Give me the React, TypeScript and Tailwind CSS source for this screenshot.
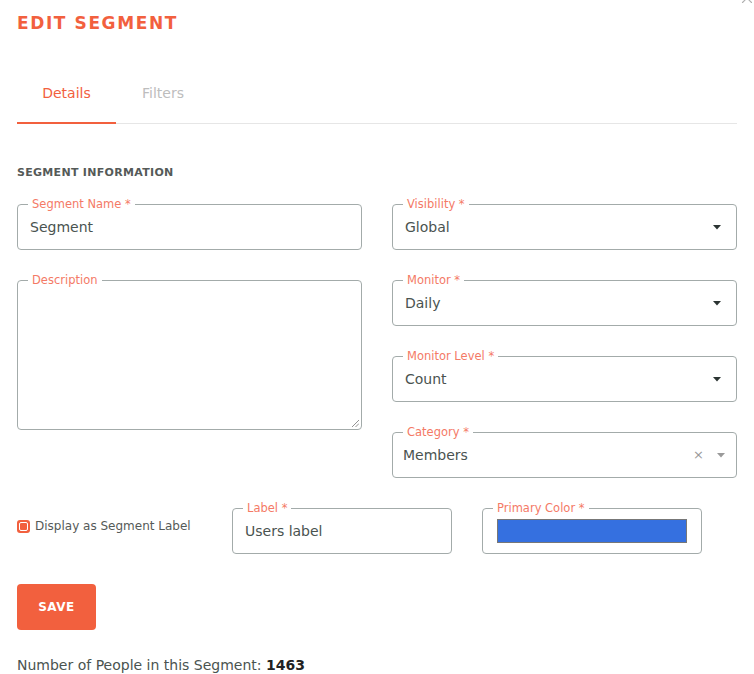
import { X } from "lucide-react";

const font = { fontFamily: '"DejaVu Sans", "Open Sans", sans-serif' };

function Field({
  label,
  className,
  children,
}: {
  label: string;
  className?: string;
  children: React.ReactNode;
}) {
  return (
    <div className={`relative rounded border border-[#a3abaa] ${className ?? ""}`}>
      <span className="absolute -top-[8px] left-[10px] bg-white px-1 text-[11.5px] leading-[14px] text-[#f47a66]">
        {label}
      </span>
      {children}
    </div>
  );
}

function Caret({ muted }: { muted?: boolean }) {
  return (
    <svg width="8" height="5" viewBox="0 0 8 5" className={muted ? "text-[#9a9a9a]" : "text-[#2b3432]"}>
      <path d="M0 0h8L4 4.5z" fill="currentColor" />
    </svg>
  );
}

function SelectField({ label, value }: { label: string; value: string }) {
  return (
    <Field label={label} className="h-[46px]">
      <div className="flex h-full items-center justify-between pl-3 pr-[15px] text-[14px] text-[#4a5350]">
        <span>{value}</span>
        <Caret />
      </div>
    </Field>
  );
}

export default function App() {
  return (
    <div className="relative h-[674px] w-[754px] overflow-hidden bg-white text-[#4a5350]" style={font}>
      {/* close button, mostly cut off at the top */}
      <X className="absolute -top-[11px] right-[-2px] h-[18px] w-[18px] text-[#b0b0b0]" strokeWidth={1.5} />

      <div className="px-[17px] pt-[11px]">
        <h1 className="text-[17px] font-bold leading-[24px] tracking-[1.6px] text-[#f2603e]">EDIT SEGMENT</h1>

        {/* Tabs */}
        <div className="mt-[44px] flex border-b border-[#e6e6e6]">
          <div className="-mb-px w-[99px] border-b-2 border-[#f2603e] pb-[19px] pt-[4px] text-center text-[14px] leading-[20px] text-[#f2603e]">
            Details
          </div>
          <div className="w-[94px] pb-[19px] pt-[4px] text-center text-[14px] leading-[20px] text-[#bdbdbd]">
            Filters
          </div>
        </div>

        <div className="mt-[42px] text-[11px] font-bold leading-[14px] tracking-[0.3px] text-[#555a58]">
          SEGMENT INFORMATION
        </div>

        {/* Form grid */}
        <div className="mt-[24px] flex gap-[30px]">
          <div className="flex w-[345px] flex-col gap-[30px]">
            <Field label="Segment Name *" className="h-[46px]">
              <div className="flex h-full items-center pl-3 text-[14px]">Segment</div>
            </Field>
            <Field label="Description" className="h-[150px]">
              <svg width="7" height="7" viewBox="0 0 7 7" className="absolute bottom-[2px] right-[2px] text-[#777]">
                <path d="M7 0L0 7M7 3.5L3.5 7" stroke="currentColor" strokeWidth="0.8" />
              </svg>
            </Field>
          </div>
          <div className="flex w-[345px] flex-col gap-[30px]">
            <SelectField label="Visibility *" value="Global" />
            <SelectField label="Monitor *" value="Daily" />
            <SelectField label="Monitor Level *" value="Count" />
            <Field label="Category *" className="h-[46px]">
              <div className="flex h-full items-center justify-between pl-[10px] pr-[11px] text-[14px]">
                <span>Members</span>
                <div className="flex items-center gap-[13px]">
                  <span className="text-[13px] text-[#9a9a9a]">×</span>
                  <Caret muted />
                </div>
              </div>
            </Field>
          </div>
        </div>

        {/* Label row */}
        <div className="mt-[30px] flex items-start">
          <label className="mt-[9px] flex w-[215px] items-center gap-[5px] text-[12px] leading-[18px] text-[#555a58]">
            <span className="flex h-[13px] w-[13px] items-center justify-center rounded-[3px] bg-[#f2603e]">
              <span className="h-[9px] w-[9px] rounded-[2px] border border-white" />
            </span>
            Display as Segment Label
          </label>
          <Field label="Label *" className="h-[46px] w-[220px]">
            <div className="flex h-full items-center pl-3 text-[14px]">Users label</div>
          </Field>
          <Field label="Primary Color *" className="ml-[30px] h-[46px] w-[220px]">
            <div className="flex h-full items-center px-[14px]">
              <div className="h-[24px] w-full border border-[#777] bg-[#3570e0]" />
            </div>
          </Field>
        </div>

        <button className="mt-[30px] h-[46px] w-[79px] rounded bg-[#f2603e] text-[12px] font-bold tracking-[0.5px] text-white">
          SAVE
        </button>

        <p className="mt-[25px] text-[14px] leading-[21px] text-[#4a5350]">
          Number of People in this Segment: <span className="font-bold text-[#222]">1463</span>
        </p>
      </div>
    </div>
  );
}
